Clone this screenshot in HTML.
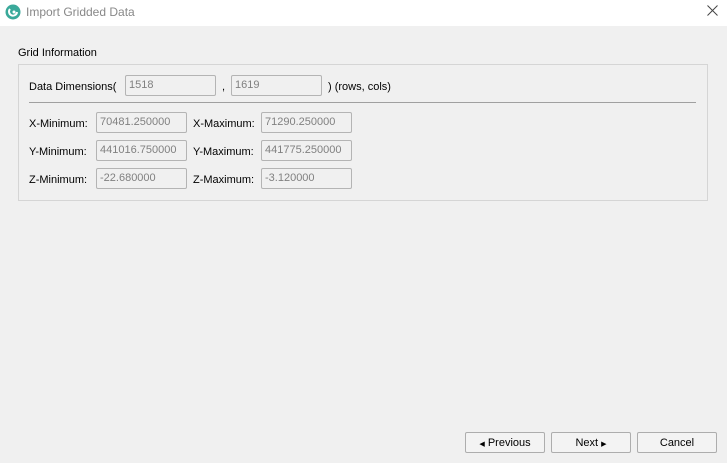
<!DOCTYPE html>
<html><head><style>
body{margin:0;width:727px;height:463px;background:#f0f0f0;font-family:"Liberation Sans",sans-serif;font-size:11px;color:#000;position:relative;overflow:hidden}
.t{position:absolute;left:0;top:0;width:727px;height:26px;background:#fff}
.a{position:absolute;white-space:nowrap}
.f{position:absolute;height:21px;border:1px solid #b4b4b4;border-radius:2px;background:#f0f0f0;color:#808080;box-sizing:border-box;padding:0 3px;line-height:19px}
.g{position:absolute;left:18px;top:64px;width:690px;height:137px;border:1px solid #d5d5d5;box-sizing:border-box}
.b{position:absolute;top:432px;width:80px;height:21px;border:1px solid #adadad;border-radius:2px;background:#f3f3f3;box-sizing:border-box;text-align:center;line-height:20px}
</style></head><body>
<div class="t"></div>
<svg class="a" style="left:5px;top:4px" width="16" height="16" viewBox="0 0 16 16"><circle cx="8" cy="8" r="7.5" fill="#3aa99a"/><path d="M5 5a4 4 0 1 0 7 3" stroke="#fff" stroke-width="2" fill="none"/><circle cx="9" cy="8" r="1.5" fill="#fff"/></svg>
<div class="a" style="left:26px;top:5px;font-size:12px;color:#888">Import Gridded Data</div>
<svg class="a" style="left:707px;top:5px" width="11" height="11" viewBox="0 0 11 11"><path d="M0.5 0.5L10.5 10.5M10.5 0.5L0.5 10.5" stroke="#444" stroke-width="1"/></svg>
<div class="a" style="left:18px;top:47px">Grid Information</div>
<div class="g"></div>
<div class="a" style="left:29px;top:81px">Data Dimensions(</div>
<div class="f" style="left:125px;top:75px;width:91px">1518</div>
<div class="a" style="left:222px;top:81px">,</div>
<div class="f" style="left:231px;top:75px;width:91px">1619</div>
<div class="a" style="left:328px;top:81px">) (rows, cols)</div>
<div class="a" style="left:29px;top:102px;width:667px;height:1px;background:#a0a0a0"></div>
<div class="a" style="left:29px;top:118px">X-Minimum:</div>
<div class="f" style="left:96px;top:112px;width:91px">70481.250000</div>
<div class="a" style="left:193px;top:118px">X-Maximum:</div>
<div class="f" style="left:261px;top:112px;width:91px">71290.250000</div>
<div class="a" style="left:29px;top:146px">Y-Minimum:</div>
<div class="f" style="left:96px;top:140px;width:91px">441016.750000</div>
<div class="a" style="left:193px;top:146px">Y-Maximum:</div>
<div class="f" style="left:261px;top:140px;width:91px">441775.250000</div>
<div class="a" style="left:29px;top:174px">Z-Minimum:</div>
<div class="f" style="left:96px;top:168px;width:91px">-22.680000</div>
<div class="a" style="left:193px;top:174px">Z-Maximum:</div>
<div class="f" style="left:261px;top:168px;width:91px">-3.120000</div>
<div class="b" style="left:465px"><span style="font-size:7px">◀</span> Previous</div>
<div class="b" style="left:551px">Next <span style="font-size:7px">▶</span></div>
<div class="b" style="left:637px">Cancel</div>
</body></html>
